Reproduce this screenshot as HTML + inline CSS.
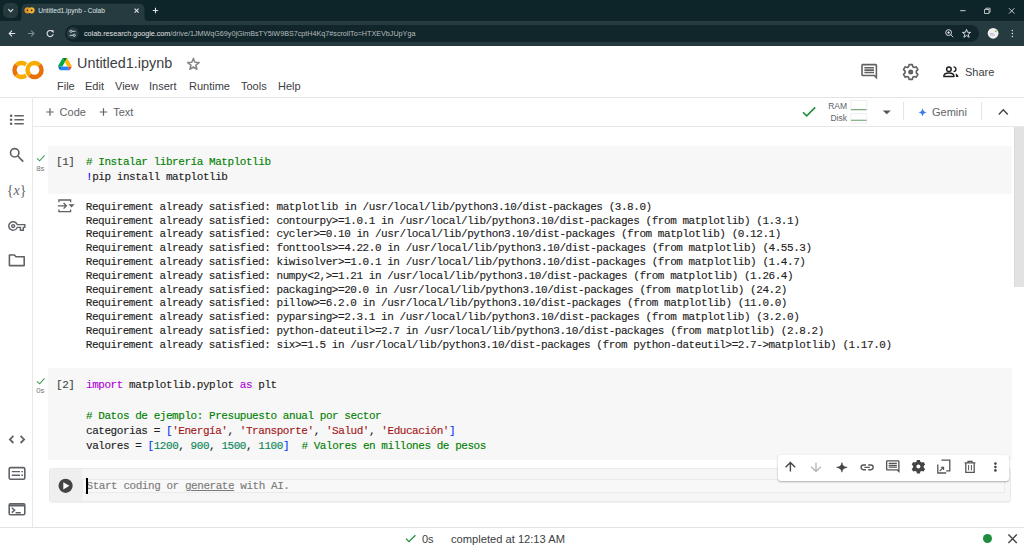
<!DOCTYPE html>
<html><head><meta charset="utf-8">
<style>
*{box-sizing:border-box}
html,body{margin:0;padding:0;width:1024px;height:550px;overflow:hidden;background:#fff;font-family:"Liberation Sans",sans-serif;position:relative}
.a{position:absolute}
.mono{font-family:"Liberation Mono",monospace;font-size:11px;letter-spacing:-0.45px;white-space:pre;-webkit-text-stroke:0.12px currentColor}
svg{position:absolute;overflow:visible}
#tabstrip{left:0;top:0;width:1024px;height:22px;background:#0d2429}
#toolbar{left:0;top:21px;width:1024px;height:25px;background:#263b3f}
#tab{left:21px;top:3px;width:125px;height:19px;background:#263b3f;border-radius:6px 6px 0 0}
#chev{left:3px;top:3px;width:15px;height:15px;background:#243a3d;border-radius:5px}
#url{left:65px;top:24.6px;width:914px;height:17.4px;background:#11262a;border-radius:9px}
.ui{color:#3c4043}
.menu{font-size:11px;color:#3c4043;top:80px}
.cellbg{background:#f7f7f7}
.cm{color:#008000}
.kw{color:#af00db}
.st{color:#a31515}
.nu{color:#098658}
.br{color:#0431fa}
.bl{color:#0000ff}
.out{color:#212121}
</style></head><body>
<!-- browser chrome -->
<div id="tabstrip" class="a"></div>
<div id="toolbar" class="a"></div>
<svg style="left:0;top:0" width="160" height="22"><path d="M17.5 21.2 Q21.5 21.2 21.5 17.2 V9.6 Q21.5 3.8 27.3 3.8 H138.7 Q144.5 3.8 144.5 9.6 V17.2 Q144.5 21.2 148.5 21.2 Z" fill="#263b3f"/></svg>
<div id="chev" class="a"></div>
<div id="url" class="a"></div>
<div class="a" style="left:38.2px;top:7.1px;font-size:6.6px;color:#dfe3e3;white-space:pre">Untitled1.ipynb - Colab</div>
<div class="a" style="left:84px;top:28.8px;font-size:7.2px;color:#e3e3e3;white-space:pre">colab.research.google.com<span style="color:#b6bcbd">/drive/1JMWqG69y0jGlmBsTY5iW9BS7cptH4Kq7#scrollTo=HTXEVbJUpYga</span></div>


<!-- ICONS: chrome -->
<svg style="left:0;top:0" width="1024" height="46">
 <path d="M8.3 9.2 L10.7 11.6 L13.1 9.2" fill="none" stroke="#dfe3e3" stroke-width="1.1"/>
 <circle cx="27.5" cy="10.3" r="2" fill="#3a2a10" stroke="#e2982e" stroke-width="2.2"/>
 <circle cx="31.6" cy="10.3" r="2" fill="#3a2a10" stroke="#f0b030" stroke-width="2.2"/>
 <path d="M134.6 8.6 L138.6 12.6 M138.6 8.6 L134.6 12.6" stroke="#dfe3e3" stroke-width="1.1"/>
 <path d="M155.5 7.8 V13.2 M152.8 10.5 H158.2" stroke="#dfe3e3" stroke-width="1.1"/>
 <path d="M960.2 10.7 H965.6" stroke="#c9cfd0" stroke-width="1"/>
 <path d="M984.5 9.5 h4.5 v4 h-4.5 z M985.8 9.5 v-1.3 h4.3 v4 h-1.1" fill="none" stroke="#c9cfd0" stroke-width="0.9"/>
 <path d="M1009 8.2 L1014.4 13.6 M1014.4 8.2 L1009 13.6" stroke="#c9cfd0" stroke-width="1"/>
 <path d="M15.2 33.5 H9.3 M12 30.6 L9.2 33.5 L12 36.4" fill="none" stroke="#dfe3e3" stroke-width="1.1"/>
 <path d="M28 33.5 H33.9 M31.2 30.6 L34 33.5 L31.2 36.4" fill="none" stroke="#7d8b8d" stroke-width="1.1"/>
 <path d="M52.6 31.6 A3.1 3.1 0 1 0 53.2 34.2" fill="none" stroke="#dfe3e3" stroke-width="1.1"/>
 <path d="M50.6 30.2 L53.6 30.2 L53.6 33.2 Z" fill="#dfe3e3"/>
 <circle cx="72.6" cy="33.3" r="6" fill="#263b3f"/>
 <path d="M69.6 31.3 H75.6 M69.6 35.3 H75.6" stroke="#dfe3e3" stroke-width="0.9"/>
 <circle cx="71" cy="31.3" r="1.1" fill="#263b3f" stroke="#dfe3e3" stroke-width="0.8"/>
 <circle cx="74.2" cy="35.3" r="1.1" fill="#263b3f" stroke="#dfe3e3" stroke-width="0.8"/>
 <circle cx="948.6" cy="32.6" r="2.9" fill="none" stroke="#dfe3e3" stroke-width="1"/>
 <path d="M950.7 34.7 L953.2 37.2 M947.2 32.6 h2.8 M948.6 31.2 v2.8" stroke="#dfe3e3" stroke-width="0.9"/>
 <path d="M966.5 29.3 L967.6 32.3 L970.6 32.4 L968.2 34.3 L969.1 37.3 L966.5 35.5 L963.9 37.3 L964.8 34.3 L962.4 32.4 L965.4 32.3 Z" fill="none" stroke="#dfe3e3" stroke-width="0.95" stroke-linejoin="round"/>
 <circle cx="993.1" cy="33.3" r="5.4" fill="#f1f1f1"/>
 <path d="M989.5 33.5 h4 M990 35 h5" stroke="#b9a7c6" stroke-width="0.8"/>
 <circle cx="995.8" cy="31.3" r="1" fill="#9bbb63"/>
 <circle cx="1012.4" cy="30.5" r="0.75" fill="#dfe3e3"/>
 <circle cx="1012.4" cy="33.5" r="0.75" fill="#dfe3e3"/>
 <circle cx="1012.4" cy="36.5" r="0.75" fill="#dfe3e3"/>
</svg>

<!-- colab logo -->
<svg style="left:12.4px;top:54px" width="32" height="32" viewBox="0 0 24 24">
  <path fill="#E8710A" d="M4.54,9.46,2.19,7.1a6.93,6.93,0,0,0,0,9.79l2.36-2.36A3.59,3.59,0,0,1,4.54,9.46Z"/>
  <path fill="#F9AB00" d="M2.19,7.1,4.54,9.46a3.59,3.59,0,0,1,5.08,0l1.71-2.93-.1-.08A6.93,6.93,0,0,0,2.19,7.1Z"/>
  <path fill="#F9AB00" d="M11.34,17.46,9.62,14.54a3.59,3.59,0,0,1-5.08,0L2.19,16.9a6.93,6.93,0,0,0,9,.65l.11-.09"/>
  <path fill="#F9AB00" d="M12,7.1a6.93,6.93,0,0,0,0,9.79l2.36-2.36a3.59,3.59,0,1,1,5.08-5.08L21.81,7.1A6.93,6.93,0,0,0,12,7.1Z"/>
  <path fill="#E8710A" d="M21.81,7.1,19.46,9.46a3.59,3.59,0,0,1-5.08,5.08L12,16.9A6.93,6.93,0,0,0,21.81,7.1Z"/>
</svg>
<!-- drive icon -->
<svg style="left:58px;top:57.6px" width="13.8" height="12.4" viewBox="0 0 87.3 78">
 <path d="m6.6 66.85 3.85 6.65c.8 1.4 1.95 2.5 3.3 3.3l13.75-23.8h-27.5c0 1.55.4 3.1 1.2 4.5z" fill="#0066da"/>
 <path d="m43.65 25-13.75-23.8c-1.35.8-2.5 1.9-3.3 3.3l-25.4 44a9.06 9.06 0 0 0 -1.2 4.5h27.5z" fill="#00ac47"/>
 <path d="m73.55 76.8c1.35-.8 2.5-1.9 3.3-3.3l1.6-2.75 7.65-13.25c.8-1.4 1.2-2.95 1.2-4.5h-27.502l5.852 11.5z" fill="#ea4335"/>
 <path d="m43.65 25 13.75-23.8c-1.35-.8-2.9-1.2-4.5-1.2h-18.5c-1.6 0-3.15.45-4.5 1.2z" fill="#00832d"/>
 <path d="m59.8 53h-32.3l-13.75 23.8c1.35.8 2.9 1.2 4.5 1.2h50.8c1.6 0 3.15-.45 4.5-1.2z" fill="#2684fc"/>
 <path d="m73.4 26.5-12.7-22c-.8-1.4-1.95-2.5-3.3-3.3l-13.75 23.8 16.15 28h27.45c0-1.55-.4-3.1-1.2-4.5z" fill="#ffba00"/>
</svg>
<svg style="left:0;top:46px" width="1024" height="80">
 <!-- star -->
 <path d="M193.40 12.40 L194.93 16.30 L199.11 16.55 L195.87 19.20 L196.93 23.25 L193.40 21.00 L189.87 23.25 L190.93 19.20 L187.69 16.55 L191.87 16.30 Z" fill="none" stroke="#858585" stroke-width="1.5" stroke-linejoin="round"/>
 <!-- comment -->
 <path transform="translate(859.6,16.3) scale(0.8,0.78)" fill="#616161" d="M21.99 4c0-1.1-.89-2-1.99-2H4c-1.1 0-2 .9-2 2v12c0 1.1.9 2 2 2h14l4 4-.01-18zM20 4v13.17L18.83 16H4V4h16zM6 12h12v2H6zm0-3h12v2H6zm0-3h12v2H6z"/>
 
 <!-- gear -->
 <g transform="translate(910.7,26)">
  <path d="M-1.6 -7.4 h3.2 l0.5 2.1 l1.4 0.8 l2.1 -0.7 l1.6 2.8 l-1.6 1.5 v1.8 l1.6 1.5 l-1.6 2.8 l-2.1 -0.7 l-1.4 0.8 l-0.5 2.1 h-3.2 l-0.5 -2.1 l-1.4 -0.8 l-2.1 0.7 l-1.6 -2.8 l1.6 -1.5 v-1.8 l-1.6 -1.5 l1.6 -2.8 l2.1 0.7 l1.4 -0.8 z" fill="none" stroke="#616161" stroke-width="1.6" stroke-linejoin="round"/>
  <circle cx="0" cy="0" r="2.5" fill="#616161"/>
 </g>
 <!-- people -->
 <circle cx="948.9" cy="23.2" r="2.3" fill="none" stroke="#202124" stroke-width="1.5"/>
 <path d="M943.8 30.6 c0-2.5 2.4-3.6 5.1-3.6 s5.1 1.1 5.1 3.6 z" fill="none" stroke="#202124" stroke-width="1.5" stroke-linejoin="round"/>
 <path d="M953.6 20.9 a2.3 2.3 0 0 1 0 4.6" fill="none" stroke="#202124" stroke-width="1.4"/>
 <path d="M955.6 27.6 c1.6 0.6 2.8 1.6 2.8 3.4 h-2.4 z" fill="#202124"/>
</svg>

<!-- colab header -->
<div class="a" style="left:77px;top:55.3px;font-size:14.4px;color:#3c4043;white-space:pre">Untitled1.ipynb</div>
<div class="a menu" style="left:57px">File</div>
<div class="a menu" style="left:85px">Edit</div>
<div class="a menu" style="left:115px">View</div>
<div class="a menu" style="left:149px">Insert</div>
<div class="a menu" style="left:189px">Runtime</div>
<div class="a menu" style="left:241px">Tools</div>
<div class="a menu" style="left:278px">Help</div>
<div class="a" style="left:965px;top:65.5px;font-size:11px;color:#3c4043">Share</div>
<div class="a" style="left:0;top:97px;width:1024px;height:1px;background:#e3e3e3"></div>

<!-- sidebar -->
<div class="a" style="left:32px;top:97px;width:1px;height:430px;background:#e8e8e8"></div>

<!-- toolbar -->
<div class="a" style="left:59.6px;top:106px;font-size:11px;color:#5f6368;white-space:pre">Code</div>
<div class="a" style="left:113.2px;top:106px;font-size:11px;color:#5f6368;white-space:pre">Text</div>
<svg style="left:0;top:100px" width="140" height="24"><path d="M50 8.3 V15.7 M46.3 12 H53.7 M103.5 8.3 V15.7 M99.8 12 H107.2" stroke="#5f6368" stroke-width="1.2"/></svg>
<div class="a" style="left:33px;top:126px;width:991px;height:1px;background:#e8e8e8"></div>
<div class="a" style="left:932px;top:105.5px;font-size:11px;color:#5f6368">Gemini</div>


<!-- toolbar right -->
<svg style="left:0;top:96px" width="1024" height="32">
 <path d="M803 16.2 L806.7 19.8 L815.2 11.4" fill="none" stroke="#1e8e3e" stroke-width="1.6"/>
 <rect x="850.8" y="4.6" width="16" height="9.6" fill="#fff" stroke="#ececec" stroke-width="0.8"/>
 <path d="M851 13.6 H866.6" stroke="#7fb07f" stroke-width="1.2"/>
 <rect x="850.8" y="17.6" width="16" height="9.6" fill="#fff" stroke="#ececec" stroke-width="0.8"/>
 <path d="M851 24.3 H866.6" stroke="#7fb07f" stroke-width="1.2"/>
 <path d="M882.8 14.4 H890.8 L886.8 18.2 Z" fill="#555"/>
 <path d="M903.6 6 V24" stroke="#e3e3e3" stroke-width="1"/>
 <path d="M981.5 6 V24" stroke="#e3e3e3" stroke-width="1"/>
 <path d="M922.6 12 C923.1 14.8 924 15.9 926.8 16.4 C924 16.9 923.1 18 922.6 20.8 C922.1 18 921.2 16.9 918.4 16.4 C921.2 15.9 922.1 14.8 922.6 12 Z" fill="#3b7ded"/>
 <path d="M998.8 18.4 L1003.3 13.8 L1007.8 18.4" fill="none" stroke="#444" stroke-width="1.4"/>
</svg>
<div class="a" style="left:828.2px;top:101px;font-size:8.5px;color:#5f6368">RAM</div>
<div class="a" style="left:830.4px;top:113.4px;font-size:8.5px;color:#5f6368">Disk</div>

<!-- sidebar icons -->
<svg style="left:0;top:97px" width="32" height="430">
 <g fill="#5f6368">
  <circle cx="11.1" cy="18.7" r="1.3"/><circle cx="11.1" cy="22.7" r="1.3"/><circle cx="11.1" cy="26.7" r="1.3"/>
 </g>
 <path d="M14.4 18.7 H23.8 M14.4 22.7 H23.8 M14.4 26.7 H23.8" stroke="#5f6368" stroke-width="1.6"/>
 <circle cx="14.7" cy="55.8" r="4.2" fill="none" stroke="#5f6368" stroke-width="1.6"/>
 <path d="M17.8 59 L23.2 64.6" stroke="#5f6368" stroke-width="1.8"/>
 <text x="16.7" y="97.6" font-family="Liberation Serif" font-size="14" fill="#5f6368" text-anchor="middle">{<tspan font-style="italic">x</tspan>}</text>
 <path transform="translate(8.1,120.6) scale(0.725,0.7)" fill="#5f6368" d="M22 19h-6v-4h-2.68c-1.14 2.420-3.6 4-6.32 4-3.86 0-7-3.14-7-7s3.14-7 7-7c2.72 0 5.17 1.58 6.32 4H24v6h-2v4zm-4-2h2v-4h2v-2H11.94l-.23-.67C11.01 8.34 9.11 7 7 7c-2.76 0-5 2.24-5 5s2.24 5 5 5c2.11 0 4.01-1.34 4.71-3.33l.23-.67H18v4zM7 15c-1.65 0-3-1.350-3-3s1.35-3 3-3 3 1.35 3 3-1.35 3-3 3zm0-4c-.55 0-1 .45-1 1s.45 1 1 1 1-.45 1-1-.45-1-1-1z"/>
 
 <path d="M9.4 158 h5 l1.6 1.8 h8.2 v8.8 h-14.8 z" fill="none" stroke="#5f6368" stroke-width="1.6" stroke-linejoin="round"/>
 <path d="M13.4 338.8 L9.9 342.4 L13.4 346 M20.6 338.8 L24.1 342.4 L20.6 346" fill="none" stroke="#5f6368" stroke-width="1.8"/>
 <rect x="9.2" y="370.6" width="15.6" height="11.6" rx="1.4" fill="none" stroke="#5f6368" stroke-width="1.6"/>
 <path d="M11.8 374.6 H20 M11.8 378.2 H20 M21.4 374.6 h1.6 M21.4 378.2 h1.6" stroke="#5f6368" stroke-width="1.4"/>
 <rect x="9.2" y="406.8" width="15.6" height="11" rx="1.2" fill="none" stroke="#5f6368" stroke-width="1.6"/>
 <path d="M9.2 408.4 H24.8" stroke="#5f6368" stroke-width="2.2"/>
 <path d="M11.8 410.8 L14.6 413.2 L11.8 415.6 M15.6 415.8 H20.8" fill="none" stroke="#5f6368" stroke-width="1.5"/>
</svg>

<!-- + code/text signs handled in text -->
<!-- cell gutter -->
<svg style="left:0;top:140px" width="100" height="330">
 <path d="M37 18.4 L39.6 20.8 L44.6 15.4" fill="none" stroke="#3d9a50" stroke-width="1.05"/>
 <path d="M37 241.4 L39.6 243.8 L44.6 238.4" fill="none" stroke="#3d9a50" stroke-width="1.05"/>
 <!-- output icon -->
 <path d="M58.9 62.2 V60 H70.6 V62.2 M58.9 69.4 V71.6 H70.6 V69.4" fill="none" stroke="#616161" stroke-width="1.3"/>
 <path d="M57.8 65.8 H66.4 M63.6 63 L66.4 65.8 L63.6 68.6" fill="none" stroke="#616161" stroke-width="1.3"/>
 <path d="M68.4 64.2 H74.6 L71.5 67.4 Z" fill="#616161"/>
</svg>
<div class="a" style="left:36.2px;top:163.6px;font-size:7.8px;color:#757575">8s</div>
<div class="a" style="left:36.2px;top:385.8px;font-size:7.8px;color:#757575">0s</div>

<!-- cell 1 -->
<div class="a cellbg" style="left:48px;top:145.6px;width:964px;height:48.6px"></div>
<div class="a mono" style="left:56px;top:155.2px;line-height:15.3px;color:#424242">[1]</div>
<div class="a mono" style="left:86px;top:155.2px;line-height:15.3px;color:#212121"><span class="cm"># Instalar librería Matplotlib</span>
<span class="bl">!</span>pip install matplotlib</div>
<div class="a mono out" style="left:85.8px;top:200.7px;line-height:13.82px">Requirement already satisfied: matplotlib in /usr/local/lib/python3.10/dist-packages (3.8.0)
Requirement already satisfied: contourpy>=1.0.1 in /usr/local/lib/python3.10/dist-packages (from matplotlib) (1.3.1)
Requirement already satisfied: cycler>=0.10 in /usr/local/lib/python3.10/dist-packages (from matplotlib) (0.12.1)
Requirement already satisfied: fonttools>=4.22.0 in /usr/local/lib/python3.10/dist-packages (from matplotlib) (4.55.3)
Requirement already satisfied: kiwisolver>=1.0.1 in /usr/local/lib/python3.10/dist-packages (from matplotlib) (1.4.7)
Requirement already satisfied: numpy&lt;2,>=1.21 in /usr/local/lib/python3.10/dist-packages (from matplotlib) (1.26.4)
Requirement already satisfied: packaging>=20.0 in /usr/local/lib/python3.10/dist-packages (from matplotlib) (24.2)
Requirement already satisfied: pillow>=6.2.0 in /usr/local/lib/python3.10/dist-packages (from matplotlib) (11.0.0)
Requirement already satisfied: pyparsing>=2.3.1 in /usr/local/lib/python3.10/dist-packages (from matplotlib) (3.2.0)
Requirement already satisfied: python-dateutil>=2.7 in /usr/local/lib/python3.10/dist-packages (from matplotlib) (2.8.2)
Requirement already satisfied: six>=1.5 in /usr/local/lib/python3.10/dist-packages (from python-dateutil>=2.7->matplotlib) (1.17.0)</div>

<!-- cell 2 -->
<div class="a cellbg" style="left:48px;top:368px;width:964px;height:92px"></div>
<div class="a mono" style="left:56px;top:378px;line-height:15.3px;color:#424242">[2]</div>
<div class="a mono" style="left:86px;top:378px;line-height:15.3px;color:#212121"><span class="kw">import</span> matplotlib.pyplot <span class="kw">as</span> plt

<span class="cm"># Datos de ejemplo: Presupuesto anual por sector</span>
categorias = <span class="br">[</span><span class="st">'Energía'</span>, <span class="st">'Transporte'</span>, <span class="st">'Salud'</span>, <span class="st">'Educación'</span><span class="br">]</span>
valores = <span class="br">[</span><span class="nu">1200</span>, <span class="nu">900</span>, <span class="nu">1500</span>, <span class="nu">1100</span><span class="br">]</span>  <span class="cm"># Valores en millones de pesos</span></div>

<!-- input cell -->
<div class="a" style="left:48.5px;top:468.3px;width:962px;height:34px;background:#f6f6f6;border:1px solid #eaeaea;border-radius:3px;box-shadow:0 0.5px 1px rgba(0,0,0,.06)"></div>
<div class="a" style="left:49.5px;top:469.3px;width:32.5px;height:32px;background:#efefef"></div>
<div class="a" style="left:82px;top:479px;width:923px;height:14px;background:#f8f8f8;border:1px solid #ebebeb"></div>
<div class="a mono" style="left:86.5px;top:480px;line-height:13px;color:#7a7a7a">Start coding or <span style="text-decoration:underline">generate</span> with AI.</div>
<div class="a" style="left:86px;top:478px;width:2px;height:15.5px;background:#000"></div>

<!-- status bar -->
<div class="a" style="left:0;top:526.5px;width:1024px;height:1px;background:#e3e3e3"></div>
<div class="a" style="left:422px;top:532.8px;font-size:11px;color:#3c4043">0s</div>
<div class="a" style="left:451px;top:532.8px;font-size:11.15px;color:#3c4043;white-space:pre">completed at 12:13 AM</div>
<div class="a" style="left:982.5px;top:533.5px;width:9.5px;height:9.5px;border-radius:50%;background:#1e8e3e"></div>

<!-- scrollbar -->
<div class="a" style="left:1014px;top:127px;width:10px;height:160px;background:#e2e2e2;border-left:1px solid #d9d9d9"></div>

<!-- cell toolbar -->
<div class="a" style="left:777.5px;top:454.5px;width:231px;height:26px;background:#fff;border-radius:3px;box-shadow:0 1px 2px rgba(0,0,0,.3),0 0 1px rgba(0,0,0,.1)"></div>

<!-- play button -->
<svg style="left:0;top:470px" width="100" height="40">
 <circle cx="65.6" cy="15.8" r="7.1" fill="#444"/>
 <path d="M63.3 12.2 L69.4 15.8 L63.3 19.4 Z" fill="#fff"/>
</svg>
<!-- cell toolbar icons -->
<svg style="left:770px;top:450px" width="254" height="40">
 <path d="M790.4 21.6 V12.6 M785.6 17.2 L790.4 12.4 L795.2 17.2" transform="translate(-770,0)" fill="none" stroke="#444" stroke-width="1.4"/>
 <path d="M816 12.4 V21.4 M811.2 16.8 L816 21.6 L820.8 16.8" transform="translate(-770,0)" fill="none" stroke="#b8b8b8" stroke-width="1.4"/>
 <path d="M841.9 12.6 C842.5 15.8 843.6 16.9 847.2 17.4 C843.6 17.9 842.5 19 841.9 22.2 C841.3 19 840.2 17.9 836.6 17.4 C840.2 16.9 841.3 15.8 841.9 12.6 Z" transform="translate(-770,0)" fill="#444" stroke="#444" stroke-width="0.6" stroke-linejoin="round"/>
 <path d="M866 15 h-2.6 a2.35 2.35 0 0 0 0 4.7 h2.6 M868.2 15 h2.6 a2.35 2.35 0 0 1 0 4.7 h-2.6 M864.4 17.35 h5.4" transform="translate(-770,0)" fill="none" stroke="#555" stroke-width="1.4"/>
 <path transform="translate(114.6,8.9) scale(0.68,0.64)" fill="#555" d="M21.99 4c0-1.1-.89-2-1.99-2H4c-1.1 0-2 .9-2 2v12c0 1.1.9 2 2 2h14l4 4-.01-18zM20 4v13.17L18.83 16H4V4h16zM6 12h12v2H6zm0-3h12v2H6zm0-3h12v2H6z"/>
 
 <g transform="translate(148.4,16.5)">
  <path d="M-1.5 -6.6 h3 l0.5 1.9 l1.3 0.7 l1.9 -0.6 l1.5 2.6 l-1.4 1.4 v1.6 l1.4 1.4 l-1.5 2.6 l-1.9 -0.6 l-1.3 0.7 l-0.5 1.9 h-3 l-0.5 -1.9 l-1.3 -0.7 l-1.9 0.6 l-1.5 -2.6 l1.4 -1.4 v-1.6 l-1.4 -1.4 l1.5 -2.6 l1.9 0.6 l1.3 -0.7 z" fill="#444"/>
  <circle cx="0" cy="0" r="2" fill="#fff"/>
 </g>
 <path d="M941.4 10.2 h8.4 v10.6 h-3.6 M937.8 14.6 v8.4 h8.4" transform="translate(-770,0)" fill="none" stroke="#555" stroke-width="1.3"/>
 <path d="M939.8 21 L943.6 17.2 M940.8 17.2 h2.8 v2.8" transform="translate(-770,0)" fill="none" stroke="#555" stroke-width="1.1"/>
 <path d="M964.6 12.8 h10.8 M968 12.8 v-1.4 h4 v1.4 M965.8 12.8 v9.6 h8.4 v-9.6" transform="translate(-770,0)" fill="none" stroke="#555" stroke-width="1.3"/>
 <path d="M968.6 15 v5.4 M971.4 15 v5.4" transform="translate(-770,0)" stroke="#555" stroke-width="1"/>
 <circle cx="225.4" cy="13.6" r="1.3" fill="#444"/>
 <circle cx="225.4" cy="17" r="1.3" fill="#444"/>
 <circle cx="225.4" cy="20.4" r="1.3" fill="#444"/>
</svg>
<!-- status icons -->
<svg style="left:0;top:528px" width="1024" height="22">
 <path d="M406 10.6 L409 13.6 L415.4 7.2" fill="none" stroke="#1e8e3e" stroke-width="1.3"/>
 <path d="M1008.4 6.6 L1016.8 15 M1016.8 6.6 L1008.4 15" stroke="#444" stroke-width="1.4"/>
</svg>
</body></html>
